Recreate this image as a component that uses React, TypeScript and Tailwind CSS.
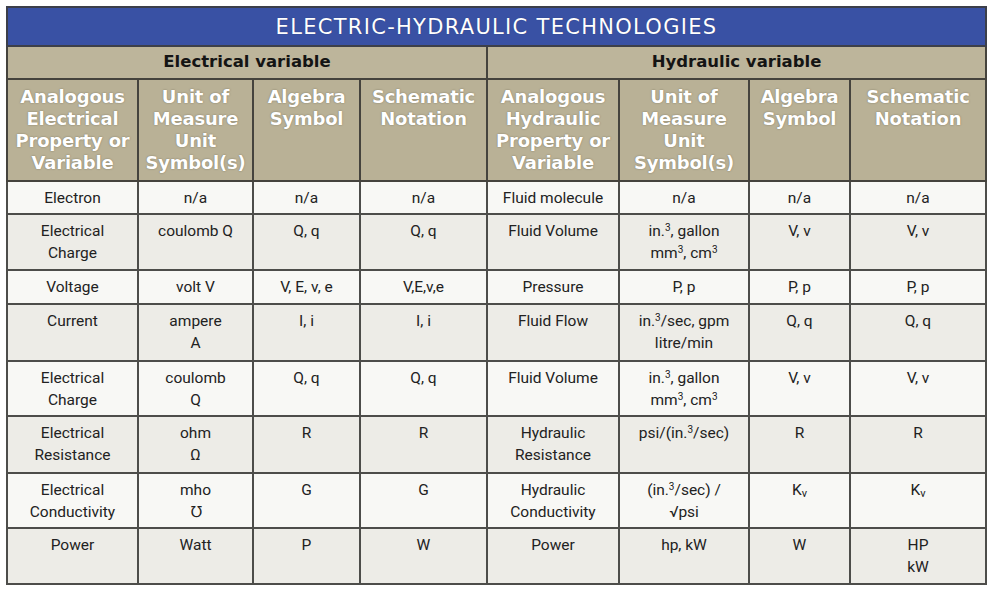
import React from "react";

type Cell = React.ReactNode[];

const cols = [
  "w-[131px]",
  "w-[115px]",
  "w-[107px]",
  "w-[127px]",
  "w-[132px]",
  "w-[130px]",
  "w-[101px]",
  "w-[136px]",
];

const headers: string[][] = [
  ["Analogous", "Electrical", "Property or", "Variable"],
  ["Unit of", "Measure", "Unit", "Symbol(s)"],
  ["Algebra", "Symbol"],
  ["Schematic", "Notation"],
  ["Analogous", "Hydraulic", "Property or", "Variable"],
  ["Unit of", "Measure", "Unit", "Symbol(s)"],
  ["Algebra", "Symbol"],
  ["Schematic", "Notation"],
];

const S = () => <sup className="text-[10px] top-[-0.55em]">3</sup>;
const Kv = () => (
  <span>
    K<sub className="text-[11px] bottom-[-0.2em]">v</sub>
  </span>
);

const rows: { h: string; dark: boolean; cells: Cell[] }[] = [
  {
    h: "h-[33px]",
    dark: false,
    cells: [["Electron"], ["n/a"], ["n/a"], ["n/a"], ["Fluid molecule"], ["n/a"], ["n/a"], ["n/a"]],
  },
  {
    h: "h-[56px]",
    dark: true,
    cells: [
      ["Electrical", "Charge"],
      ["coulomb Q"],
      ["Q, q"],
      ["Q, q"],
      ["Fluid Volume"],
      [
        <>in.<S />, gallon</>,
        <>mm<S />, cm<S /></>,
      ],
      ["V, v"],
      ["V, v"],
    ],
  },
  {
    h: "h-[34px]",
    dark: false,
    cells: [["Voltage"], ["volt V"], ["V, E, v, e"], ["V,E,v,e"], ["Pressure"], ["P, p"], ["P, p"], ["P, p"]],
  },
  {
    h: "h-[57px]",
    dark: true,
    cells: [
      ["Current"],
      ["ampere", "A"],
      ["I, i"],
      ["I, i"],
      ["Fluid Flow"],
      [<>in.<S />/sec, gpm</>, "litre/min"],
      ["Q, q"],
      ["Q, q"],
    ],
  },
  {
    h: "h-[55px]",
    dark: false,
    cells: [
      ["Electrical", "Charge"],
      ["coulomb", "Q"],
      ["Q, q"],
      ["Q, q"],
      ["Fluid Volume"],
      [
        <>in.<S />, gallon</>,
        <>mm<S />, cm<S /></>,
      ],
      ["V, v"],
      ["V, v"],
    ],
  },
  {
    h: "h-[57px]",
    dark: true,
    cells: [
      ["Electrical", "Resistance"],
      ["ohm", "Ω"],
      ["R"],
      ["R"],
      ["Hydraulic", "Resistance"],
      [<>psi/(in.<S />/sec)</>],
      ["R"],
      ["R"],
    ],
  },
  {
    h: "h-[55px]",
    dark: false,
    cells: [
      ["Electrical", "Conductivity"],
      ["mho", "℧"],
      ["G"],
      ["G"],
      ["Hydraulic", "Conductivity"],
      [<>(in.<S />/sec) /</>, "√psi"],
      [<Kv />],
      [<Kv />],
    ],
  },
  {
    h: "h-[56px]",
    dark: true,
    cells: [["Power"], ["Watt"], ["P"], ["W"], ["Power"], ["hp, kW"], ["W"], ["HP", "kW"]],
  },
];

export default function App() {
  return (
    <div className="w-[997px] h-[590px] bg-white pt-[6px] pl-[6px]">
      <table className="table-fixed border-collapse w-[979px]">
        <colgroup>
          {cols.map((w, i) => (
            <col key={i} className={w} />
          ))}
        </colgroup>
        <tbody>
          <tr className="h-[39px]">
            <td
              colSpan={8}
              className="border-2 border-[#3c3f4a] bg-[#3951a4] text-center text-white text-[21px] leading-[24px] tracking-[1.3px] p-0 font-['DejaVu_Sans',sans-serif] [text-shadow:0_0_1px_rgba(0,0,0,0.35)]"
            >
              ELECTRIC-HYDRAULIC TECHNOLOGIES
            </td>
          </tr>
          <tr className="h-[33px]">
            <td
              colSpan={4}
              className="border-2 border-[#45433d] bg-[#bdb59b] text-center text-[#141414] font-bold text-[16.5px] p-0 font-['DejaVu_Sans',sans-serif]"
            >
              Electrical variable
            </td>
            <td
              colSpan={4}
              className="border-2 border-[#45433d] bg-[#bdb59b] text-center text-[#141414] font-bold text-[16.5px] p-0 font-['DejaVu_Sans',sans-serif]"
            >
              Hydraulic variable
            </td>
          </tr>
          <tr className="h-[102px]">
            {headers.map((lines, i) => (
              <td
                key={i}
                className="border-2 border-[#45433d] bg-[#b9b196] align-top text-center text-white font-bold text-[18px] leading-[22px] pt-[6px] px-0 whitespace-nowrap tracking-[-0.2px] font-['DejaVu_Sans',sans-serif] [text-shadow:0_0_1.5px_rgba(60,55,40,0.6)]"
              >
                {lines.map((l, j) => (
                  <div key={j}>{l}</div>
                ))}
              </td>
            ))}
          </tr>
          {rows.map((r, ri) => (
            <tr key={ri} className={r.h}>
              {r.cells.map((c, ci) => (
                <td
                  key={ci}
                  className={`border-2 border-[#4d4d4a] align-top text-center text-[#222222] text-[15.5px] leading-[22px] pt-[5px] px-0 whitespace-nowrap font-['Roboto','Liberation_Sans',sans-serif] ${
                    r.dark ? "bg-[#edece7]" : "bg-[#f8f8f5]"
                  }`}
                >
                  {c.map((l, j) => (
                    <div key={j}>{l}</div>
                  ))}
                </td>
              ))}
            </tr>
          ))}
        </tbody>
      </table>
    </div>
  );
}
